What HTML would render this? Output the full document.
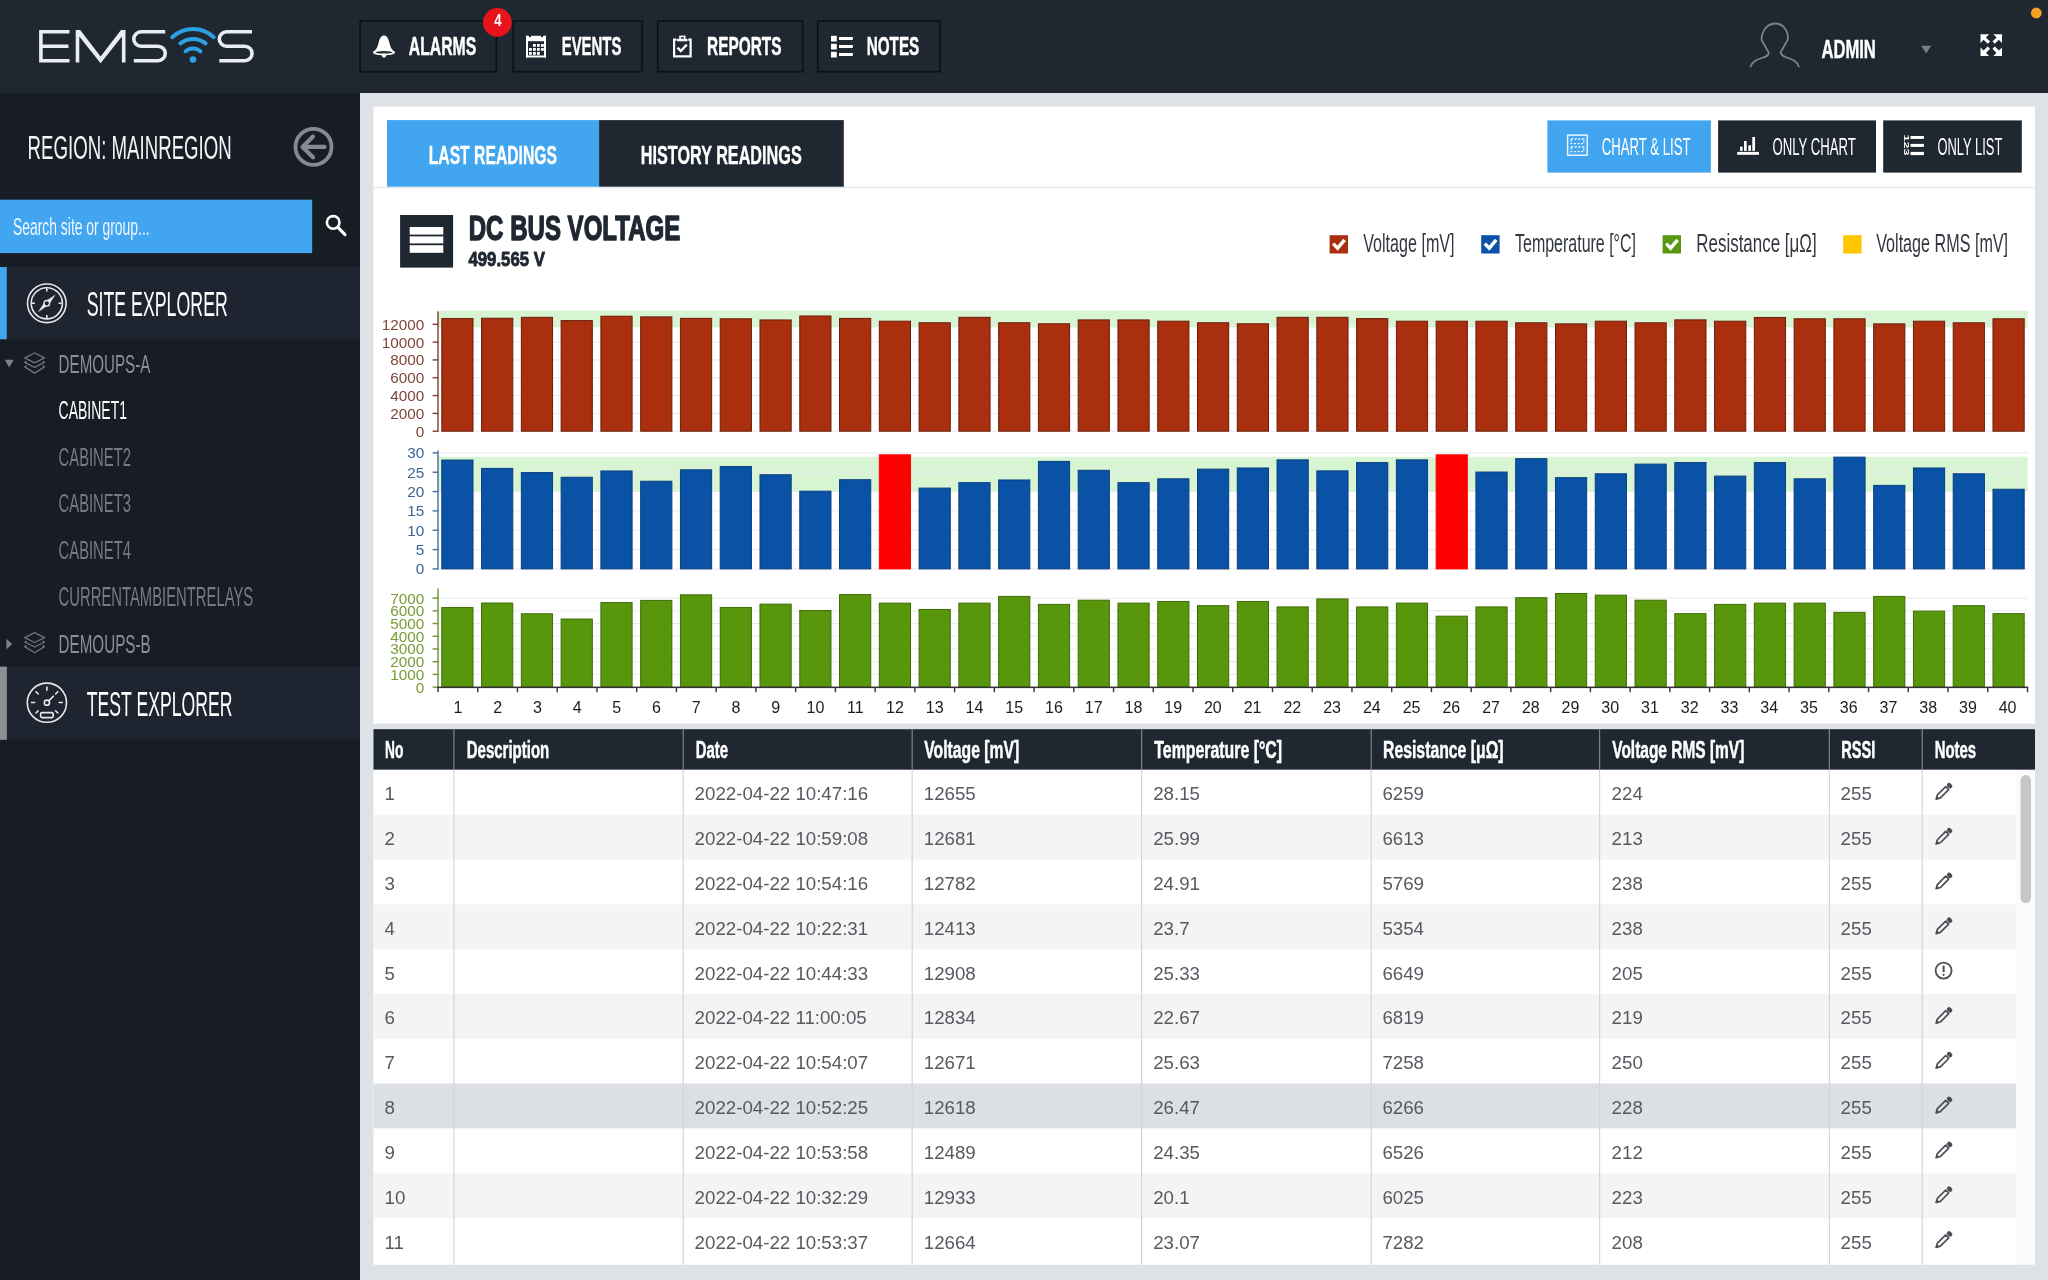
<!DOCTYPE html>
<html><head><meta charset="utf-8"><title>EMSoS - Last Readings</title>
<style>
html,body{margin:0;padding:0;background:#dee1e6;overflow:hidden;}
svg{display:block;font-family:"Liberation Sans",sans-serif;will-change:transform;}
</style></head>
<body>
<svg width="2048" height="1280" viewBox="0 0 2048 1280">
<rect x="0.00" y="0.00" width="2048.00" height="1280.00" fill="#dee1e6" />
<rect x="0.00" y="0.00" width="2048.00" height="93.00" fill="#1f2731" />
<rect x="0.00" y="93.00" width="360.00" height="1187.00" fill="#181d25" />
<g fill="none" stroke="#e9ecf0" stroke-width="3.6" stroke-linecap="butt" stroke-linejoin="miter">
<path d="M69.5 31.8 H40.9 V60.7 H69.5 M40.9 46.2 H68.5"/>
</g>
<path d="M75.7 62.5 V30 H80.2 L100.6 56.6 L121 30 H125.5 V62.5 H121.9 V36.6 L100.6 63.2 L79.3 36.6 V62.5 Z" fill="#e9ecf0"/>
<path d="M165.2 31.8 H141.0 A7.2 7.2 0 0 0 141.0 46.2 H158.0 A7.2 7.2 0 0 1 158.0 60.7 H133.8" fill="none" stroke="#e9ecf0" stroke-width="3.6"/>
<path d="M252.0 31.8 H226.5 A7.2 7.2 0 0 0 226.5 46.2 H244.8 A7.2 7.2 0 0 1 244.8 60.7 H219.3" fill="none" stroke="#e9ecf0" stroke-width="3.6"/>
<path d="M172.2 37.2 A30.5 30.5 0 0 1 213.8 37.2" fill="none" stroke="#2d9fe3" stroke-width="4" stroke-linecap="round"/>
<path d="M180.4 43.3 A20.5 20.5 0 0 1 205.6 43.3" fill="none" stroke="#2d9fe3" stroke-width="4" stroke-linecap="round"/>
<path d="M185.6 51.3 A11 11 0 0 1 200.4 51.3" fill="none" stroke="#2d9fe3" stroke-width="4" stroke-linecap="round"/>
<circle cx="193.0" cy="59.5" r="3.3" fill="#2d9fe3"/>
<rect x="360.15" y="21.1" width="136.20" height="50.6" fill="#1f2731" stroke="#0d1116" stroke-width="1.6"/>
<rect x="513.25" y="21.1" width="128.80" height="50.6" fill="#1f2731" stroke="#0d1116" stroke-width="1.6"/>
<rect x="657.75" y="21.1" width="145.00" height="50.6" fill="#1f2731" stroke="#0d1116" stroke-width="1.6"/>
<rect x="817.75" y="21.1" width="122.30" height="50.6" fill="#1f2731" stroke="#0d1116" stroke-width="1.6"/>
<text x="408.73" y="55.27" font-size="25.51" font-weight="bold" fill="#ffffff" textLength="67.56" lengthAdjust="spacingAndGlyphs"  stroke="#ffffff" stroke-width="0.45" stroke-linejoin="round">ALARMS</text>
<text x="561.73" y="55.27" font-size="25.51" font-weight="bold" fill="#ffffff" textLength="59.65" lengthAdjust="spacingAndGlyphs"  stroke="#ffffff" stroke-width="0.45" stroke-linejoin="round">EVENTS</text>
<text x="707.02" y="55.27" font-size="25.51" font-weight="bold" fill="#ffffff" textLength="74.55" lengthAdjust="spacingAndGlyphs"  stroke="#ffffff" stroke-width="0.45" stroke-linejoin="round">REPORTS</text>
<text x="866.73" y="55.27" font-size="25.51" font-weight="bold" fill="#ffffff" textLength="52.55" lengthAdjust="spacingAndGlyphs"  stroke="#ffffff" stroke-width="0.45" stroke-linejoin="round">NOTES</text>
<circle cx="497.4" cy="22.4" r="14.4" fill="#e8141b"/>
<text x="494.20" y="25.60" font-size="17.01" font-weight="bold" fill="#ffffff" textLength="7.30" lengthAdjust="spacingAndGlyphs" >4</text>
<path d="M384 35.4 C386.6 35.4 388.2 38 389.1 41.6 C390.1 46 390.8 49.2 394.8 51.8 C396.2 53.6 391.6 55.4 384 55.4 C376.4 55.4 371.8 53.6 373.2 51.8 C377.2 49.2 377.9 46 378.9 41.6 C379.8 38 381.4 35.4 384 35.4 Z" fill="#fff"/>
<ellipse cx="384" cy="52.3" rx="8.6" ry="1.25" fill="#1f2731"/>
<circle cx="384" cy="55.6" r="2.1" fill="#fff"/>
<g fill="#fff">
<rect x="526" y="35.8" width="20" height="5.4"/>
<rect x="526" y="35.8" width="2" height="21.7"/><rect x="544" y="35.8" width="2" height="21.7"/><rect x="526" y="55.5" width="20" height="2"/>
<rect x="533" y="44" width="2.8" height="2.8"/>
<rect x="537" y="44" width="2.8" height="2.8"/>
<rect x="541" y="44" width="2.8" height="2.8"/>
<rect x="529" y="48" width="2.8" height="2.8"/>
<rect x="533" y="48" width="2.8" height="2.8"/>
<rect x="537" y="48" width="2.8" height="2.8"/>
<rect x="541" y="48" width="2.8" height="2.8"/>
<rect x="529" y="52" width="2.8" height="2.8"/>
<rect x="533" y="52" width="2.8" height="2.8"/>
<rect x="537" y="52" width="2.8" height="2.8"/>
</g>
<circle cx="530" cy="36" r="1.2" fill="#1f2731"/><circle cx="542" cy="36" r="1.2" fill="#1f2731"/>
<g fill="none" stroke="#fff" stroke-width="2.2">
<path d="M676.5 39.6 H674.1 V56.4 H690.6 V39.6 H688.2"/>
<path d="M677.5 47.6 L680.8 51 L686.8 44.6" stroke-width="2.4"/>
</g>
<rect x="677" y="38.9" width="10.5" height="2.4" fill="#fff"/>
<rect x="680" y="36.4" width="4.8" height="3.2" fill="none" stroke="#fff" stroke-width="1.6"/>
<g fill="#fff">
<rect x="831" y="35.8" width="5.8" height="5.7"/>
<rect x="831" y="43.8" width="5.8" height="5.7"/>
<rect x="831" y="51.8" width="5.8" height="5.7"/>
<rect x="839" y="37" width="13.8" height="3"/>
<rect x="839" y="45" width="13.8" height="3"/>
<rect x="839" y="53" width="13.8" height="3"/>
</g>
<path d="M1750.5 66.5 C1753 61 1757 59.5 1762 58 C1766 56.8 1769 55 1768.6 52.4 L1761.8 40.5 C1761 38 1763 30 1766 27.5 C1769 24.5 1772 23.5 1775.4 23.5 C1779 23.5 1782.5 25 1785 28.5 C1787.5 32 1788.3 37 1787.6 40 L1780.6 52.4 C1780.8 55 1784 56.8 1788 58 C1793 59.5 1796.5 61 1798.8 66.5" fill="none" stroke="#7c838c" stroke-width="1.8" stroke-linecap="round"/>
<text x="1821.42" y="57.57" font-size="26.24" font-weight="bold" fill="#ffffff" textLength="54.46" lengthAdjust="spacingAndGlyphs"  stroke="#ffffff" stroke-width="0.45" stroke-linejoin="round">ADMIN</text>
<path d="M1921.2 45.8 H1931.2 L1926.2 53.6 Z" fill="#79808a"/>
<polygon points="1980.50,34.30 1989.10,34.30 1980.50,42.90" fill="#fff"/>
<line x1="1984.00" y1="37.80" x2="1988.90" y2="42.70" stroke="#fff" stroke-width="3.3"/>
<polygon points="2002.00,34.30 1993.40,34.30 2002.00,42.90" fill="#fff"/>
<line x1="1998.50" y1="37.80" x2="1993.60" y2="42.70" stroke="#fff" stroke-width="3.3"/>
<polygon points="1980.50,56.00 1989.10,56.00 1980.50,47.40" fill="#fff"/>
<line x1="1984.00" y1="52.50" x2="1988.90" y2="47.60" stroke="#fff" stroke-width="3.3"/>
<polygon points="2002.00,56.00 1993.40,56.00 2002.00,47.40" fill="#fff"/>
<line x1="1998.50" y1="52.50" x2="1993.60" y2="47.60" stroke="#fff" stroke-width="3.3"/>
<circle cx="2036.3" cy="13" r="5.4" fill="#f5a01e"/>
<text x="27.50" y="158.70" font-size="32.99" font-weight="normal" fill="#f2f4f6" textLength="204.31" lengthAdjust="spacingAndGlyphs" >REGION: MAINREGION</text>
<circle cx="313.5" cy="146.9" r="18" fill="none" stroke="#858a90" stroke-width="3.8"/>
<path d="M302.5 146.9 H324.5 M313 136.6 L302.5 146.9 L313 157.2" fill="none" stroke="#858a90" stroke-width="4.2" stroke-linecap="round" stroke-linejoin="round"/>
<rect x="0.00" y="199.70" width="312.20" height="53.40" fill="#42a5f0" />
<text x="13.00" y="235.40" font-size="23.55" font-weight="normal" fill="#eef7fd" textLength="136.61" lengthAdjust="spacingAndGlyphs" >Search site or group...</text>
<circle cx="333.2" cy="222.4" r="6.3" fill="none" stroke="#fff" stroke-width="2.6"/>
<path d="M338 227.4 L345 234.6" stroke="#fff" stroke-width="3" stroke-linecap="round"/>
<rect x="0.00" y="267.00" width="360.00" height="72.30" fill="#1e2530" />
<rect x="0.00" y="267.00" width="6.80" height="72.30" fill="#42a5f0" />
<g fill="none" stroke="#e6e8ea" stroke-width="1.6">
<circle cx="46.8" cy="303.3" r="19.3"/><circle cx="46.8" cy="303.3" r="15.6"/>
<path d="M46.8 288.5 V291.5 M46.8 315 V318 M32 303.3 H35 M58.6 303.3 H61.6"/>
</g>
<path d="M55.6 294.4 L48.6 305.2 L45 301.6 Z" fill="#e6e8ea"/><path d="M37.9 312.2 L44.9 301.4 L48.5 305 Z" fill="#e6e8ea"/>
<circle cx="46.8" cy="303.3" r="2.8" fill="#1e2530" stroke="#e6e8ea" stroke-width="1.4"/>
<text x="86.70" y="315.50" font-size="34.16" font-weight="normal" fill="#ffffff" textLength="141.10" lengthAdjust="spacingAndGlyphs" >SITE EXPLORER</text>
<path d="M4.7 359.8 H13.7 L9.2 367.5 Z" fill="#7b8087"/>
<g fill="none" stroke="#6f757c" stroke-width="1.3" stroke-linejoin="round">
<path d="M34.6 353.0 L44.5 357.90000000000003 L34.6 362.8 L24.7 357.90000000000003 Z"/>
<path d="M26.6 361.3 L24.7 362.3 L34.6 367.3 L44.5 362.3 L42.6 361.3"/>
<path d="M26.6 365.8 L24.7 366.90000000000003 L34.6 373.1 L44.5 366.90000000000003 L42.6 365.8"/>
</g>
<text x="58.60" y="372.50" font-size="25.44" font-weight="normal" fill="#8b9097" textLength="91.80" lengthAdjust="spacingAndGlyphs" >DEMOUPS-A</text>
<text x="58.60" y="419.40" font-size="26.02" font-weight="normal" fill="#ffffff" textLength="68.40" lengthAdjust="spacingAndGlyphs" >CABINET1</text>
<text x="58.60" y="466.00" font-size="26.02" font-weight="normal" fill="#747b84" textLength="72.30" lengthAdjust="spacingAndGlyphs" >CABINET2</text>
<text x="58.60" y="512.20" font-size="26.02" font-weight="normal" fill="#747b84" textLength="72.30" lengthAdjust="spacingAndGlyphs" >CABINET3</text>
<text x="58.60" y="559.00" font-size="26.02" font-weight="normal" fill="#747b84" textLength="72.30" lengthAdjust="spacingAndGlyphs" >CABINET4</text>
<text x="58.60" y="605.80" font-size="26.89" font-weight="normal" fill="#747b84" textLength="194.61" lengthAdjust="spacingAndGlyphs" >CURRENTAMBIENTRELAYS</text>
<path d="M6.3 638.8 L12.2 644.1 L6.3 649.4 Z" fill="#7b8087"/>
<g fill="none" stroke="#6f757c" stroke-width="1.3" stroke-linejoin="round">
<path d="M34.6 632.7 L44.5 637.6 L34.6 642.5 L24.7 637.6 Z"/>
<path d="M26.6 641 L24.7 642 L34.6 647 L44.5 642 L42.6 641"/>
<path d="M26.6 645.5 L24.7 646.6 L34.6 652.8 L44.5 646.6 L42.6 645.5"/>
</g>
<text x="58.60" y="652.70" font-size="25.44" font-weight="normal" fill="#8b9097" textLength="92.00" lengthAdjust="spacingAndGlyphs" >DEMOUPS-B</text>
<rect x="0.00" y="666.60" width="360.00" height="73.20" fill="#1e2530" />
<rect x="0.00" y="666.60" width="6.90" height="73.20" fill="#8c9196" />
<g fill="none" stroke="#e6e8ea" stroke-width="1.6" stroke-linecap="round">
<circle cx="46.9" cy="702.7" r="19.6"/>
<path d="M46.9 687 V690.2 M36 691.8 L38.2 694 M57.8 691.8 L55.6 694 M31.5 702.5 H34.6 M59.2 702.5 H62.3 M36 713 L38.2 710.8 M57.8 713 L55.6 710.8"/>
<path d="M49 700.6 L53.4 696.2"/>
<circle cx="46.9" cy="702.7" r="2.6"/>
<rect x="40.6" y="712.6" width="12.6" height="5" rx="1.5"/>
</g>
<text x="86.70" y="716.40" font-size="35.76" font-weight="normal" fill="#ffffff" textLength="145.80" lengthAdjust="spacingAndGlyphs" >TEST EXPLORER</text>
<rect x="373.50" y="106.60" width="1661.50" height="617.00" fill="#ffffff" />
<rect x="373.50" y="186.80" width="1661.50" height="1.40" fill="#e6e7ea" />
<rect x="387.00" y="120.10" width="212.10" height="66.60" fill="#42a5f0" />
<rect x="599.10" y="120.10" width="244.70" height="66.60" fill="#1f2731" />
<text x="428.70" y="163.80" font-size="26.31" font-weight="bold" fill="#ffffff" textLength="128.30" lengthAdjust="spacingAndGlyphs"  stroke="#ffffff" stroke-width="0.4" stroke-linejoin="round">LAST READINGS</text>
<text x="640.80" y="163.80" font-size="26.31" font-weight="bold" fill="#ffffff" textLength="160.90" lengthAdjust="spacingAndGlyphs"  stroke="#ffffff" stroke-width="0.4" stroke-linejoin="round">HISTORY READINGS</text>
<rect x="1547.40" y="120.40" width="163.50" height="52.20" fill="#42a5f0" />
<rect x="1718.10" y="120.40" width="157.90" height="52.20" fill="#1f2731" />
<rect x="1883.20" y="120.40" width="138.60" height="52.20" fill="#1f2731" />
<text x="1601.70" y="154.70" font-size="23.40" font-weight="normal" fill="#ffffff" textLength="88.80" lengthAdjust="spacingAndGlyphs" >CHART &amp; LIST</text>
<text x="1772.40" y="154.70" font-size="23.40" font-weight="normal" fill="#ffffff" textLength="83.50" lengthAdjust="spacingAndGlyphs" >ONLY CHART</text>
<text x="1937.50" y="154.70" font-size="23.40" font-weight="normal" fill="#ffffff" textLength="64.79" lengthAdjust="spacingAndGlyphs" >ONLY LIST</text>
<rect x="1567.6" y="135.1" width="19.6" height="20.1" fill="none" stroke="#e8f6ff" stroke-width="1.5"/>
<rect x="1571" y="139" width="12.8" height="4.6" fill="none" stroke="#e8f6ff" stroke-width="1.3" stroke-dasharray="2.2 1.4"/>
<rect x="1571" y="147" width="12.8" height="4.6" fill="none" stroke="#e8f6ff" stroke-width="1.3" stroke-dasharray="2.2 1.4"/>
<g fill="#fff">
<rect x="1740.1" y="146.6" width="2.5" height="4.3"/><rect x="1744" y="141" width="2.7" height="9.9"/>
<rect x="1748.3" y="145.3" width="2.7" height="5.6"/><rect x="1752.3" y="137" width="2.7" height="13.9"/>
<rect x="1737.2" y="151.9" width="21.8" height="2.9"/>
</g>
<g fill="#fff">
<rect x="1910.5" y="136" width="13.4" height="2.9"/><rect x="1910.5" y="143.9" width="13.4" height="3"/><rect x="1910.5" y="151.9" width="13.4" height="3.2"/>
</g>
<text x="0" y="0" font-size="7.2" font-weight="bold" fill="#fff" transform="translate(1904 134.6) rotate(90)" textLength="21" lengthAdjust="spacingAndGlyphs">123</text>
<rect x="400.10" y="215.00" width="53.00" height="52.60" fill="#1f2731" />
<g fill="#fff"><rect x="409.7" y="227" width="33.6" height="7.6"/><rect x="409.7" y="236.4" width="33.6" height="7"/><rect x="409.7" y="245.2" width="33.6" height="7.6"/></g>
<text x="468.75" y="239.65" font-size="35.61" font-weight="bold" fill="#1f2731" textLength="211.51" lengthAdjust="spacingAndGlyphs"  stroke="#1f2731" stroke-width="1.5" stroke-linejoin="round">DC BUS VOLTAGE</text>
<text x="468.45" y="266.35" font-size="20.93" font-weight="bold" fill="#1f2731" textLength="76.49" lengthAdjust="spacingAndGlyphs"  stroke="#1f2731" stroke-width="0.9" stroke-linejoin="round">499.565 V</text>
<rect x="1329.6" y="235.2" width="18.4" height="18.3" fill="#a8300f"/>
<path d="M1333.2 243.6 L1337.6 248.2 L1344.6 239.8" fill="none" stroke="#fff" stroke-width="3.4"/>
<rect x="1481.2" y="235.2" width="18.4" height="18.3" fill="#0a52a7"/>
<path d="M1484.8 243.6 L1489.2 248.2 L1496.2 239.8" fill="none" stroke="#fff" stroke-width="3.4"/>
<rect x="1662.6" y="235.2" width="18.4" height="18.3" fill="#58980f"/>
<path d="M1666.2 243.6 L1670.6 248.2 L1677.6 239.8" fill="none" stroke="#fff" stroke-width="3.4"/>
<rect x="1843.2" y="235.2" width="18.4" height="18.3" fill="#ffc500"/>
<text x="1363.20" y="252.40" font-size="26.16" font-weight="normal" fill="#333840" textLength="91.40" lengthAdjust="spacingAndGlyphs" >Voltage [mV]</text>
<text x="1515.00" y="252.40" font-size="26.16" font-weight="normal" fill="#333840" textLength="121.01" lengthAdjust="spacingAndGlyphs" >Temperature [°C]</text>
<text x="1696.30" y="252.40" font-size="26.16" font-weight="normal" fill="#333840" textLength="120.30" lengthAdjust="spacingAndGlyphs" >Resistance [μΩ]</text>
<text x="1876.20" y="252.40" font-size="26.16" font-weight="normal" fill="#333840" textLength="131.90" lengthAdjust="spacingAndGlyphs" >Voltage RMS [mV]</text>
<rect x="438.0" y="310.8" width="1589.5" height="16.6" fill="#d7f5d2"/>
<rect x="438.0" y="430.70" width="1589.5" height="1" fill="#e9e9ea"/>
<rect x="438.0" y="412.88" width="1589.5" height="1" fill="#e9e9ea"/>
<rect x="438.0" y="395.07" width="1589.5" height="1" fill="#e9e9ea"/>
<rect x="438.0" y="377.25" width="1589.5" height="1" fill="#e9e9ea"/>
<rect x="438.0" y="359.43" width="1589.5" height="1" fill="#e9e9ea"/>
<rect x="438.0" y="341.62" width="1589.5" height="1" fill="#e9e9ea"/>
<rect x="438.0" y="323.80" width="1589.5" height="1" fill="#e9e9ea"/>
<rect x="441.80" y="318.47" width="31.2" height="112.73" fill="#a92f0e" stroke="#6a1d0b" stroke-width="1"/>
<rect x="481.57" y="318.23" width="31.2" height="112.97" fill="#a92f0e" stroke="#6a1d0b" stroke-width="1"/>
<rect x="521.35" y="317.33" width="31.2" height="113.87" fill="#a92f0e" stroke="#6a1d0b" stroke-width="1"/>
<rect x="561.12" y="320.62" width="31.2" height="110.58" fill="#a92f0e" stroke="#6a1d0b" stroke-width="1"/>
<rect x="600.90" y="316.21" width="31.2" height="114.99" fill="#a92f0e" stroke="#6a1d0b" stroke-width="1"/>
<rect x="640.67" y="316.87" width="31.2" height="114.33" fill="#a92f0e" stroke="#6a1d0b" stroke-width="1"/>
<rect x="680.44" y="318.32" width="31.2" height="112.88" fill="#a92f0e" stroke="#6a1d0b" stroke-width="1"/>
<rect x="720.22" y="318.79" width="31.2" height="112.41" fill="#a92f0e" stroke="#6a1d0b" stroke-width="1"/>
<rect x="759.99" y="319.94" width="31.2" height="111.26" fill="#a92f0e" stroke="#6a1d0b" stroke-width="1"/>
<rect x="799.77" y="315.99" width="31.2" height="115.21" fill="#a92f0e" stroke="#6a1d0b" stroke-width="1"/>
<rect x="839.54" y="318.38" width="31.2" height="112.82" fill="#a92f0e" stroke="#6a1d0b" stroke-width="1"/>
<rect x="879.31" y="321.20" width="31.2" height="110.00" fill="#a92f0e" stroke="#6a1d0b" stroke-width="1"/>
<rect x="919.09" y="322.75" width="31.2" height="108.45" fill="#a92f0e" stroke="#6a1d0b" stroke-width="1"/>
<rect x="958.86" y="317.32" width="31.2" height="113.88" fill="#a92f0e" stroke="#6a1d0b" stroke-width="1"/>
<rect x="998.64" y="322.75" width="31.2" height="108.45" fill="#a92f0e" stroke="#6a1d0b" stroke-width="1"/>
<rect x="1038.41" y="323.78" width="31.2" height="107.42" fill="#a92f0e" stroke="#6a1d0b" stroke-width="1"/>
<rect x="1078.18" y="319.91" width="31.2" height="111.29" fill="#a92f0e" stroke="#6a1d0b" stroke-width="1"/>
<rect x="1117.96" y="319.91" width="31.2" height="111.29" fill="#a92f0e" stroke="#6a1d0b" stroke-width="1"/>
<rect x="1157.73" y="321.20" width="31.2" height="110.00" fill="#a92f0e" stroke="#6a1d0b" stroke-width="1"/>
<rect x="1197.51" y="322.75" width="31.2" height="108.45" fill="#a92f0e" stroke="#6a1d0b" stroke-width="1"/>
<rect x="1237.28" y="323.78" width="31.2" height="107.42" fill="#a92f0e" stroke="#6a1d0b" stroke-width="1"/>
<rect x="1277.05" y="317.32" width="31.2" height="113.88" fill="#a92f0e" stroke="#6a1d0b" stroke-width="1"/>
<rect x="1316.83" y="317.32" width="31.2" height="113.88" fill="#a92f0e" stroke="#6a1d0b" stroke-width="1"/>
<rect x="1356.60" y="318.62" width="31.2" height="112.58" fill="#a92f0e" stroke="#6a1d0b" stroke-width="1"/>
<rect x="1396.38" y="321.20" width="31.2" height="110.00" fill="#a92f0e" stroke="#6a1d0b" stroke-width="1"/>
<rect x="1436.15" y="321.20" width="31.2" height="110.00" fill="#a92f0e" stroke="#6a1d0b" stroke-width="1"/>
<rect x="1475.92" y="321.20" width="31.2" height="110.00" fill="#a92f0e" stroke="#6a1d0b" stroke-width="1"/>
<rect x="1515.70" y="322.80" width="31.2" height="108.40" fill="#a92f0e" stroke="#6a1d0b" stroke-width="1"/>
<rect x="1555.47" y="323.87" width="31.2" height="107.33" fill="#a92f0e" stroke="#6a1d0b" stroke-width="1"/>
<rect x="1595.25" y="321.20" width="31.2" height="110.00" fill="#a92f0e" stroke="#6a1d0b" stroke-width="1"/>
<rect x="1635.02" y="322.80" width="31.2" height="108.40" fill="#a92f0e" stroke="#6a1d0b" stroke-width="1"/>
<rect x="1674.79" y="319.86" width="31.2" height="111.34" fill="#a92f0e" stroke="#6a1d0b" stroke-width="1"/>
<rect x="1714.57" y="321.20" width="31.2" height="110.00" fill="#a92f0e" stroke="#6a1d0b" stroke-width="1"/>
<rect x="1754.34" y="317.45" width="31.2" height="113.75" fill="#a92f0e" stroke="#6a1d0b" stroke-width="1"/>
<rect x="1794.12" y="318.79" width="31.2" height="112.41" fill="#a92f0e" stroke="#6a1d0b" stroke-width="1"/>
<rect x="1833.89" y="318.79" width="31.2" height="112.41" fill="#a92f0e" stroke="#6a1d0b" stroke-width="1"/>
<rect x="1873.66" y="323.87" width="31.2" height="107.33" fill="#a92f0e" stroke="#6a1d0b" stroke-width="1"/>
<rect x="1913.44" y="321.20" width="31.2" height="110.00" fill="#a92f0e" stroke="#6a1d0b" stroke-width="1"/>
<rect x="1953.21" y="322.80" width="31.2" height="108.40" fill="#a92f0e" stroke="#6a1d0b" stroke-width="1"/>
<rect x="1992.99" y="318.79" width="31.2" height="112.41" fill="#a92f0e" stroke="#6a1d0b" stroke-width="1"/>
<rect x="437.3" y="311.4" width="1.4" height="120.5" fill="#7d3f30"/>
<rect x="432.6" y="430.50" width="5.4" height="1.4" fill="#7d3f30"/>
<text x="424.2" y="436.60" font-size="15.3" fill="#80463a" text-anchor="end">0</text>
<rect x="432.6" y="412.68" width="5.4" height="1.4" fill="#7d3f30"/>
<text x="424.2" y="418.78" font-size="15.3" fill="#80463a" text-anchor="end">2000</text>
<rect x="432.6" y="394.87" width="5.4" height="1.4" fill="#7d3f30"/>
<text x="424.2" y="400.97" font-size="15.3" fill="#80463a" text-anchor="end">4000</text>
<rect x="432.6" y="377.05" width="5.4" height="1.4" fill="#7d3f30"/>
<text x="424.2" y="383.15" font-size="15.3" fill="#80463a" text-anchor="end">6000</text>
<rect x="432.6" y="359.23" width="5.4" height="1.4" fill="#7d3f30"/>
<text x="424.2" y="365.33" font-size="15.3" fill="#80463a" text-anchor="end">8000</text>
<rect x="432.6" y="341.42" width="5.4" height="1.4" fill="#7d3f30"/>
<text x="424.2" y="347.52" font-size="15.3" fill="#80463a" text-anchor="end">10000</text>
<rect x="432.6" y="323.60" width="5.4" height="1.4" fill="#7d3f30"/>
<text x="424.2" y="329.70" font-size="15.3" fill="#80463a" text-anchor="end">12000</text>
<rect x="438.0" y="456.8" width="1589.5" height="35.0" fill="#d7f5d2"/>
<rect x="438.0" y="568.40" width="1589.5" height="1" fill="#e9e9ea"/>
<rect x="438.0" y="549.07" width="1589.5" height="1" fill="#e9e9ea"/>
<rect x="438.0" y="529.73" width="1589.5" height="1" fill="#e9e9ea"/>
<rect x="438.0" y="510.40" width="1589.5" height="1" fill="#e9e9ea"/>
<rect x="438.0" y="491.07" width="1589.5" height="1" fill="#e9e9ea"/>
<rect x="438.0" y="471.73" width="1589.5" height="1" fill="#e9e9ea"/>
<rect x="438.0" y="452.40" width="1589.5" height="1" fill="#e9e9ea"/>
<rect x="441.80" y="460.05" width="31.2" height="108.85" fill="#0a52a6" stroke="#0a3f80" stroke-width="1"/>
<rect x="481.57" y="468.41" width="31.2" height="100.49" fill="#0a52a6" stroke="#0a3f80" stroke-width="1"/>
<rect x="521.35" y="472.58" width="31.2" height="96.32" fill="#0a52a6" stroke="#0a3f80" stroke-width="1"/>
<rect x="561.12" y="477.26" width="31.2" height="91.64" fill="#0a52a6" stroke="#0a3f80" stroke-width="1"/>
<rect x="600.90" y="470.96" width="31.2" height="97.94" fill="#0a52a6" stroke="#0a3f80" stroke-width="1"/>
<rect x="640.67" y="481.24" width="31.2" height="87.66" fill="#0a52a6" stroke="#0a3f80" stroke-width="1"/>
<rect x="680.44" y="469.80" width="31.2" height="99.10" fill="#0a52a6" stroke="#0a3f80" stroke-width="1"/>
<rect x="720.22" y="466.55" width="31.2" height="102.35" fill="#0a52a6" stroke="#0a3f80" stroke-width="1"/>
<rect x="759.99" y="474.75" width="31.2" height="94.15" fill="#0a52a6" stroke="#0a3f80" stroke-width="1"/>
<rect x="799.77" y="491.18" width="31.2" height="77.72" fill="#0a52a6" stroke="#0a3f80" stroke-width="1"/>
<rect x="839.54" y="479.70" width="31.2" height="89.20" fill="#0a52a6" stroke="#0a3f80" stroke-width="1"/>
<rect x="879.31" y="454.83" width="31.2" height="114.07" fill="#ff0000" stroke="#ff0000" stroke-width="1"/>
<rect x="919.09" y="488.09" width="31.2" height="80.81" fill="#0a52a6" stroke="#0a3f80" stroke-width="1"/>
<rect x="958.86" y="482.67" width="31.2" height="86.23" fill="#0a52a6" stroke="#0a3f80" stroke-width="1"/>
<rect x="998.64" y="479.97" width="31.2" height="88.93" fill="#0a52a6" stroke="#0a3f80" stroke-width="1"/>
<rect x="1038.41" y="461.41" width="31.2" height="107.49" fill="#0a52a6" stroke="#0a3f80" stroke-width="1"/>
<rect x="1078.18" y="470.30" width="31.2" height="98.60" fill="#0a52a6" stroke="#0a3f80" stroke-width="1"/>
<rect x="1117.96" y="482.67" width="31.2" height="86.23" fill="#0a52a6" stroke="#0a3f80" stroke-width="1"/>
<rect x="1157.73" y="478.81" width="31.2" height="90.09" fill="#0a52a6" stroke="#0a3f80" stroke-width="1"/>
<rect x="1197.51" y="469.14" width="31.2" height="99.76" fill="#0a52a6" stroke="#0a3f80" stroke-width="1"/>
<rect x="1237.28" y="467.98" width="31.2" height="100.92" fill="#0a52a6" stroke="#0a3f80" stroke-width="1"/>
<rect x="1277.05" y="459.86" width="31.2" height="109.04" fill="#0a52a6" stroke="#0a3f80" stroke-width="1"/>
<rect x="1316.83" y="470.88" width="31.2" height="98.02" fill="#0a52a6" stroke="#0a3f80" stroke-width="1"/>
<rect x="1356.60" y="462.57" width="31.2" height="106.33" fill="#0a52a6" stroke="#0a3f80" stroke-width="1"/>
<rect x="1396.38" y="459.86" width="31.2" height="109.04" fill="#0a52a6" stroke="#0a3f80" stroke-width="1"/>
<rect x="1436.15" y="454.83" width="31.2" height="114.07" fill="#ff0000" stroke="#ff0000" stroke-width="1"/>
<rect x="1475.92" y="472.04" width="31.2" height="96.86" fill="#0a52a6" stroke="#0a3f80" stroke-width="1"/>
<rect x="1515.70" y="458.70" width="31.2" height="110.20" fill="#0a52a6" stroke="#0a3f80" stroke-width="1"/>
<rect x="1555.47" y="477.65" width="31.2" height="91.25" fill="#0a52a6" stroke="#0a3f80" stroke-width="1"/>
<rect x="1595.25" y="473.78" width="31.2" height="95.12" fill="#0a52a6" stroke="#0a3f80" stroke-width="1"/>
<rect x="1635.02" y="464.11" width="31.2" height="104.79" fill="#0a52a6" stroke="#0a3f80" stroke-width="1"/>
<rect x="1674.79" y="462.57" width="31.2" height="106.33" fill="#0a52a6" stroke="#0a3f80" stroke-width="1"/>
<rect x="1714.57" y="476.10" width="31.2" height="92.80" fill="#0a52a6" stroke="#0a3f80" stroke-width="1"/>
<rect x="1754.34" y="462.57" width="31.2" height="106.33" fill="#0a52a6" stroke="#0a3f80" stroke-width="1"/>
<rect x="1794.12" y="478.81" width="31.2" height="90.09" fill="#0a52a6" stroke="#0a3f80" stroke-width="1"/>
<rect x="1833.89" y="457.15" width="31.2" height="111.75" fill="#0a52a6" stroke="#0a3f80" stroke-width="1"/>
<rect x="1873.66" y="485.38" width="31.2" height="83.52" fill="#0a52a6" stroke="#0a3f80" stroke-width="1"/>
<rect x="1913.44" y="467.98" width="31.2" height="100.92" fill="#0a52a6" stroke="#0a3f80" stroke-width="1"/>
<rect x="1953.21" y="473.78" width="31.2" height="95.12" fill="#0a52a6" stroke="#0a3f80" stroke-width="1"/>
<rect x="1992.99" y="489.25" width="31.2" height="79.65" fill="#0a52a6" stroke="#0a3f80" stroke-width="1"/>
<rect x="437.3" y="450.6" width="1.4" height="119.0" fill="#44709c"/>
<rect x="432.6" y="568.20" width="5.4" height="1.4" fill="#44709c"/>
<text x="424.2" y="574.30" font-size="15.3" fill="#3a6592" text-anchor="end">0</text>
<rect x="432.6" y="548.87" width="5.4" height="1.4" fill="#44709c"/>
<text x="424.2" y="554.97" font-size="15.3" fill="#3a6592" text-anchor="end">5</text>
<rect x="432.6" y="529.53" width="5.4" height="1.4" fill="#44709c"/>
<text x="424.2" y="535.63" font-size="15.3" fill="#3a6592" text-anchor="end">10</text>
<rect x="432.6" y="510.20" width="5.4" height="1.4" fill="#44709c"/>
<text x="424.2" y="516.30" font-size="15.3" fill="#3a6592" text-anchor="end">15</text>
<rect x="432.6" y="490.87" width="5.4" height="1.4" fill="#44709c"/>
<text x="424.2" y="496.97" font-size="15.3" fill="#3a6592" text-anchor="end">20</text>
<rect x="432.6" y="471.53" width="5.4" height="1.4" fill="#44709c"/>
<text x="424.2" y="477.63" font-size="15.3" fill="#3a6592" text-anchor="end">25</text>
<rect x="432.6" y="452.20" width="5.4" height="1.4" fill="#44709c"/>
<text x="424.2" y="458.30" font-size="15.3" fill="#3a6592" text-anchor="end">30</text>
<rect x="438.0" y="686.60" width="1589.5" height="1" fill="#e9e9ea"/>
<rect x="438.0" y="673.89" width="1589.5" height="1" fill="#e9e9ea"/>
<rect x="438.0" y="661.17" width="1589.5" height="1" fill="#e9e9ea"/>
<rect x="438.0" y="648.46" width="1589.5" height="1" fill="#e9e9ea"/>
<rect x="438.0" y="635.74" width="1589.5" height="1" fill="#e9e9ea"/>
<rect x="438.0" y="623.03" width="1589.5" height="1" fill="#e9e9ea"/>
<rect x="438.0" y="610.31" width="1589.5" height="1" fill="#e9e9ea"/>
<rect x="438.0" y="597.60" width="1589.5" height="1" fill="#e9e9ea"/>
<rect x="441.80" y="607.52" width="31.2" height="79.58" fill="#58960c" stroke="#3f6d08" stroke-width="1"/>
<rect x="481.57" y="603.02" width="31.2" height="84.08" fill="#58960c" stroke="#3f6d08" stroke-width="1"/>
<rect x="521.35" y="613.75" width="31.2" height="73.35" fill="#58960c" stroke="#3f6d08" stroke-width="1"/>
<rect x="561.12" y="619.03" width="31.2" height="68.07" fill="#58960c" stroke="#3f6d08" stroke-width="1"/>
<rect x="600.90" y="602.56" width="31.2" height="84.54" fill="#58960c" stroke="#3f6d08" stroke-width="1"/>
<rect x="640.67" y="600.40" width="31.2" height="86.70" fill="#58960c" stroke="#3f6d08" stroke-width="1"/>
<rect x="680.44" y="594.82" width="31.2" height="92.28" fill="#58960c" stroke="#3f6d08" stroke-width="1"/>
<rect x="720.22" y="607.43" width="31.2" height="79.67" fill="#58960c" stroke="#3f6d08" stroke-width="1"/>
<rect x="759.99" y="604.13" width="31.2" height="82.97" fill="#58960c" stroke="#3f6d08" stroke-width="1"/>
<rect x="799.77" y="610.50" width="31.2" height="76.60" fill="#58960c" stroke="#3f6d08" stroke-width="1"/>
<rect x="839.54" y="594.51" width="31.2" height="92.59" fill="#58960c" stroke="#3f6d08" stroke-width="1"/>
<rect x="879.31" y="603.13" width="31.2" height="83.97" fill="#58960c" stroke="#3f6d08" stroke-width="1"/>
<rect x="919.09" y="609.43" width="31.2" height="77.67" fill="#58960c" stroke="#3f6d08" stroke-width="1"/>
<rect x="958.86" y="603.13" width="31.2" height="83.97" fill="#58960c" stroke="#3f6d08" stroke-width="1"/>
<rect x="998.64" y="596.42" width="31.2" height="90.68" fill="#58960c" stroke="#3f6d08" stroke-width="1"/>
<rect x="1038.41" y="604.39" width="31.2" height="82.71" fill="#58960c" stroke="#3f6d08" stroke-width="1"/>
<rect x="1078.18" y="600.20" width="31.2" height="86.90" fill="#58960c" stroke="#3f6d08" stroke-width="1"/>
<rect x="1117.96" y="603.13" width="31.2" height="83.97" fill="#58960c" stroke="#3f6d08" stroke-width="1"/>
<rect x="1157.73" y="601.46" width="31.2" height="85.64" fill="#58960c" stroke="#3f6d08" stroke-width="1"/>
<rect x="1197.51" y="605.65" width="31.2" height="81.45" fill="#58960c" stroke="#3f6d08" stroke-width="1"/>
<rect x="1237.28" y="601.46" width="31.2" height="85.64" fill="#58960c" stroke="#3f6d08" stroke-width="1"/>
<rect x="1277.05" y="606.91" width="31.2" height="80.19" fill="#58960c" stroke="#3f6d08" stroke-width="1"/>
<rect x="1316.83" y="598.94" width="31.2" height="88.16" fill="#58960c" stroke="#3f6d08" stroke-width="1"/>
<rect x="1356.60" y="606.91" width="31.2" height="80.19" fill="#58960c" stroke="#3f6d08" stroke-width="1"/>
<rect x="1396.38" y="603.13" width="31.2" height="83.97" fill="#58960c" stroke="#3f6d08" stroke-width="1"/>
<rect x="1436.15" y="616.15" width="31.2" height="70.95" fill="#58960c" stroke="#3f6d08" stroke-width="1"/>
<rect x="1475.92" y="606.91" width="31.2" height="80.19" fill="#58960c" stroke="#3f6d08" stroke-width="1"/>
<rect x="1515.70" y="597.68" width="31.2" height="89.42" fill="#58960c" stroke="#3f6d08" stroke-width="1"/>
<rect x="1555.47" y="593.48" width="31.2" height="93.62" fill="#58960c" stroke="#3f6d08" stroke-width="1"/>
<rect x="1595.25" y="595.16" width="31.2" height="91.94" fill="#58960c" stroke="#3f6d08" stroke-width="1"/>
<rect x="1635.02" y="600.20" width="31.2" height="86.90" fill="#58960c" stroke="#3f6d08" stroke-width="1"/>
<rect x="1674.79" y="613.64" width="31.2" height="73.46" fill="#58960c" stroke="#3f6d08" stroke-width="1"/>
<rect x="1714.57" y="604.39" width="31.2" height="82.71" fill="#58960c" stroke="#3f6d08" stroke-width="1"/>
<rect x="1754.34" y="603.13" width="31.2" height="83.97" fill="#58960c" stroke="#3f6d08" stroke-width="1"/>
<rect x="1794.12" y="603.13" width="31.2" height="83.97" fill="#58960c" stroke="#3f6d08" stroke-width="1"/>
<rect x="1833.89" y="612.38" width="31.2" height="74.72" fill="#58960c" stroke="#3f6d08" stroke-width="1"/>
<rect x="1873.66" y="596.42" width="31.2" height="90.68" fill="#58960c" stroke="#3f6d08" stroke-width="1"/>
<rect x="1913.44" y="611.12" width="31.2" height="75.98" fill="#58960c" stroke="#3f6d08" stroke-width="1"/>
<rect x="1953.21" y="605.65" width="31.2" height="81.45" fill="#58960c" stroke="#3f6d08" stroke-width="1"/>
<rect x="1992.99" y="613.64" width="31.2" height="73.46" fill="#58960c" stroke="#3f6d08" stroke-width="1"/>
<rect x="437.3" y="588.4" width="1.4" height="99.4" fill="#6f9233"/>
<rect x="432.6" y="686.40" width="5.4" height="1.4" fill="#6f9233"/>
<text x="424.2" y="692.50" font-size="15.3" fill="#789c36" text-anchor="end">0</text>
<rect x="432.6" y="673.69" width="5.4" height="1.4" fill="#6f9233"/>
<text x="424.2" y="679.79" font-size="15.3" fill="#789c36" text-anchor="end">1000</text>
<rect x="432.6" y="660.97" width="5.4" height="1.4" fill="#6f9233"/>
<text x="424.2" y="667.07" font-size="15.3" fill="#789c36" text-anchor="end">2000</text>
<rect x="432.6" y="648.26" width="5.4" height="1.4" fill="#6f9233"/>
<text x="424.2" y="654.36" font-size="15.3" fill="#789c36" text-anchor="end">3000</text>
<rect x="432.6" y="635.54" width="5.4" height="1.4" fill="#6f9233"/>
<text x="424.2" y="641.64" font-size="15.3" fill="#789c36" text-anchor="end">4000</text>
<rect x="432.6" y="622.83" width="5.4" height="1.4" fill="#6f9233"/>
<text x="424.2" y="628.93" font-size="15.3" fill="#789c36" text-anchor="end">5000</text>
<rect x="432.6" y="610.11" width="5.4" height="1.4" fill="#6f9233"/>
<text x="424.2" y="616.21" font-size="15.3" fill="#789c36" text-anchor="end">6000</text>
<rect x="432.6" y="597.40" width="5.4" height="1.4" fill="#6f9233"/>
<text x="424.2" y="603.50" font-size="15.3" fill="#789c36" text-anchor="end">7000</text>
<rect x="437.3" y="686.6" width="1590.9" height="1.5" fill="#333333"/>
<rect x="437.30" y="687" width="1.4" height="5.2" fill="#333333"/>
<rect x="477.04" y="687" width="1.4" height="5.2" fill="#333333"/>
<rect x="516.77" y="687" width="1.4" height="5.2" fill="#333333"/>
<rect x="556.51" y="687" width="1.4" height="5.2" fill="#333333"/>
<rect x="596.25" y="687" width="1.4" height="5.2" fill="#333333"/>
<rect x="635.99" y="687" width="1.4" height="5.2" fill="#333333"/>
<rect x="675.72" y="687" width="1.4" height="5.2" fill="#333333"/>
<rect x="715.46" y="687" width="1.4" height="5.2" fill="#333333"/>
<rect x="755.20" y="687" width="1.4" height="5.2" fill="#333333"/>
<rect x="794.94" y="687" width="1.4" height="5.2" fill="#333333"/>
<rect x="834.67" y="687" width="1.4" height="5.2" fill="#333333"/>
<rect x="874.41" y="687" width="1.4" height="5.2" fill="#333333"/>
<rect x="914.15" y="687" width="1.4" height="5.2" fill="#333333"/>
<rect x="953.89" y="687" width="1.4" height="5.2" fill="#333333"/>
<rect x="993.62" y="687" width="1.4" height="5.2" fill="#333333"/>
<rect x="1033.36" y="687" width="1.4" height="5.2" fill="#333333"/>
<rect x="1073.10" y="687" width="1.4" height="5.2" fill="#333333"/>
<rect x="1112.84" y="687" width="1.4" height="5.2" fill="#333333"/>
<rect x="1152.58" y="687" width="1.4" height="5.2" fill="#333333"/>
<rect x="1192.31" y="687" width="1.4" height="5.2" fill="#333333"/>
<rect x="1232.05" y="687" width="1.4" height="5.2" fill="#333333"/>
<rect x="1271.79" y="687" width="1.4" height="5.2" fill="#333333"/>
<rect x="1311.52" y="687" width="1.4" height="5.2" fill="#333333"/>
<rect x="1351.26" y="687" width="1.4" height="5.2" fill="#333333"/>
<rect x="1391.00" y="687" width="1.4" height="5.2" fill="#333333"/>
<rect x="1430.74" y="687" width="1.4" height="5.2" fill="#333333"/>
<rect x="1470.47" y="687" width="1.4" height="5.2" fill="#333333"/>
<rect x="1510.21" y="687" width="1.4" height="5.2" fill="#333333"/>
<rect x="1549.95" y="687" width="1.4" height="5.2" fill="#333333"/>
<rect x="1589.69" y="687" width="1.4" height="5.2" fill="#333333"/>
<rect x="1629.42" y="687" width="1.4" height="5.2" fill="#333333"/>
<rect x="1669.16" y="687" width="1.4" height="5.2" fill="#333333"/>
<rect x="1708.90" y="687" width="1.4" height="5.2" fill="#333333"/>
<rect x="1748.64" y="687" width="1.4" height="5.2" fill="#333333"/>
<rect x="1788.37" y="687" width="1.4" height="5.2" fill="#333333"/>
<rect x="1828.11" y="687" width="1.4" height="5.2" fill="#333333"/>
<rect x="1867.85" y="687" width="1.4" height="5.2" fill="#333333"/>
<rect x="1907.59" y="687" width="1.4" height="5.2" fill="#333333"/>
<rect x="1947.32" y="687" width="1.4" height="5.2" fill="#333333"/>
<rect x="1987.06" y="687" width="1.4" height="5.2" fill="#333333"/>
<rect x="2026.80" y="687" width="1.4" height="5.2" fill="#333333"/>
<text x="457.87" y="713.4" font-size="16" fill="#1c1c1c" text-anchor="middle">1</text>
<text x="497.61" y="713.4" font-size="16" fill="#1c1c1c" text-anchor="middle">2</text>
<text x="537.34" y="713.4" font-size="16" fill="#1c1c1c" text-anchor="middle">3</text>
<text x="577.08" y="713.4" font-size="16" fill="#1c1c1c" text-anchor="middle">4</text>
<text x="616.82" y="713.4" font-size="16" fill="#1c1c1c" text-anchor="middle">5</text>
<text x="656.56" y="713.4" font-size="16" fill="#1c1c1c" text-anchor="middle">6</text>
<text x="696.29" y="713.4" font-size="16" fill="#1c1c1c" text-anchor="middle">7</text>
<text x="736.03" y="713.4" font-size="16" fill="#1c1c1c" text-anchor="middle">8</text>
<text x="775.77" y="713.4" font-size="16" fill="#1c1c1c" text-anchor="middle">9</text>
<text x="815.51" y="713.4" font-size="16" fill="#1c1c1c" text-anchor="middle">10</text>
<text x="855.24" y="713.4" font-size="16" fill="#1c1c1c" text-anchor="middle">11</text>
<text x="894.98" y="713.4" font-size="16" fill="#1c1c1c" text-anchor="middle">12</text>
<text x="934.72" y="713.4" font-size="16" fill="#1c1c1c" text-anchor="middle">13</text>
<text x="974.46" y="713.4" font-size="16" fill="#1c1c1c" text-anchor="middle">14</text>
<text x="1014.19" y="713.4" font-size="16" fill="#1c1c1c" text-anchor="middle">15</text>
<text x="1053.93" y="713.4" font-size="16" fill="#1c1c1c" text-anchor="middle">16</text>
<text x="1093.67" y="713.4" font-size="16" fill="#1c1c1c" text-anchor="middle">17</text>
<text x="1133.41" y="713.4" font-size="16" fill="#1c1c1c" text-anchor="middle">18</text>
<text x="1173.14" y="713.4" font-size="16" fill="#1c1c1c" text-anchor="middle">19</text>
<text x="1212.88" y="713.4" font-size="16" fill="#1c1c1c" text-anchor="middle">20</text>
<text x="1252.62" y="713.4" font-size="16" fill="#1c1c1c" text-anchor="middle">21</text>
<text x="1292.36" y="713.4" font-size="16" fill="#1c1c1c" text-anchor="middle">22</text>
<text x="1332.09" y="713.4" font-size="16" fill="#1c1c1c" text-anchor="middle">23</text>
<text x="1371.83" y="713.4" font-size="16" fill="#1c1c1c" text-anchor="middle">24</text>
<text x="1411.57" y="713.4" font-size="16" fill="#1c1c1c" text-anchor="middle">25</text>
<text x="1451.31" y="713.4" font-size="16" fill="#1c1c1c" text-anchor="middle">26</text>
<text x="1491.04" y="713.4" font-size="16" fill="#1c1c1c" text-anchor="middle">27</text>
<text x="1530.78" y="713.4" font-size="16" fill="#1c1c1c" text-anchor="middle">28</text>
<text x="1570.52" y="713.4" font-size="16" fill="#1c1c1c" text-anchor="middle">29</text>
<text x="1610.26" y="713.4" font-size="16" fill="#1c1c1c" text-anchor="middle">30</text>
<text x="1649.99" y="713.4" font-size="16" fill="#1c1c1c" text-anchor="middle">31</text>
<text x="1689.73" y="713.4" font-size="16" fill="#1c1c1c" text-anchor="middle">32</text>
<text x="1729.47" y="713.4" font-size="16" fill="#1c1c1c" text-anchor="middle">33</text>
<text x="1769.21" y="713.4" font-size="16" fill="#1c1c1c" text-anchor="middle">34</text>
<text x="1808.94" y="713.4" font-size="16" fill="#1c1c1c" text-anchor="middle">35</text>
<text x="1848.68" y="713.4" font-size="16" fill="#1c1c1c" text-anchor="middle">36</text>
<text x="1888.42" y="713.4" font-size="16" fill="#1c1c1c" text-anchor="middle">37</text>
<text x="1928.16" y="713.4" font-size="16" fill="#1c1c1c" text-anchor="middle">38</text>
<text x="1967.89" y="713.4" font-size="16" fill="#1c1c1c" text-anchor="middle">39</text>
<text x="2007.63" y="713.4" font-size="16" fill="#1c1c1c" text-anchor="middle">40</text>
<rect x="373.50" y="729.20" width="1661.50" height="40.60" fill="#1f2731" />
<rect x="373.50" y="769.80" width="1642.50" height="495.00" fill="#ffffff" />
<rect x="2016.00" y="769.80" width="19.00" height="495.00" fill="#fbfbfb" />
<rect x="373.50" y="814.62" width="1642.50" height="44.82" fill="#f4f4f5" />
<rect x="373.50" y="904.26" width="1642.50" height="44.82" fill="#f4f4f5" />
<rect x="373.50" y="993.90" width="1642.50" height="44.82" fill="#f4f4f5" />
<rect x="373.50" y="1083.54" width="1642.50" height="44.82" fill="#dcdfe4" />
<rect x="373.50" y="1173.18" width="1642.50" height="44.82" fill="#f4f4f5" />
<rect x="2020.5" y="775" width="10.5" height="128" rx="5.2" fill="#c4c6ca"/>
<rect x="453.30" y="769.80" width="1.20" height="495.00" fill="#d4d5d8" />
<rect x="453.30" y="729.20" width="1.20" height="40.60" fill="#7d828a" />
<rect x="682.60" y="769.80" width="1.20" height="495.00" fill="#d4d5d8" />
<rect x="682.60" y="729.20" width="1.20" height="40.60" fill="#7d828a" />
<rect x="911.60" y="769.80" width="1.20" height="495.00" fill="#d4d5d8" />
<rect x="911.60" y="729.20" width="1.20" height="40.60" fill="#7d828a" />
<rect x="1141.00" y="769.80" width="1.20" height="495.00" fill="#d4d5d8" />
<rect x="1141.00" y="729.20" width="1.20" height="40.60" fill="#7d828a" />
<rect x="1370.60" y="769.80" width="1.20" height="495.00" fill="#d4d5d8" />
<rect x="1370.60" y="729.20" width="1.20" height="40.60" fill="#7d828a" />
<rect x="1599.00" y="769.80" width="1.20" height="495.00" fill="#d4d5d8" />
<rect x="1599.00" y="729.20" width="1.20" height="40.60" fill="#7d828a" />
<rect x="1828.80" y="769.80" width="1.20" height="495.00" fill="#d4d5d8" />
<rect x="1828.80" y="729.20" width="1.20" height="40.60" fill="#7d828a" />
<rect x="1921.60" y="769.80" width="1.20" height="495.00" fill="#d4d5d8" />
<rect x="1921.60" y="729.20" width="1.20" height="40.60" fill="#7d828a" />
<text x="385.05" y="758.25" font-size="23.11" font-weight="bold" fill="#ffffff" textLength="18.30" lengthAdjust="spacingAndGlyphs"  stroke="#ffffff" stroke-width="0.5" stroke-linejoin="round">No</text>
<text x="466.75" y="758.25" font-size="23.11" font-weight="bold" fill="#ffffff" textLength="82.50" lengthAdjust="spacingAndGlyphs"  stroke="#ffffff" stroke-width="0.5" stroke-linejoin="round">Description</text>
<text x="695.75" y="758.25" font-size="23.11" font-weight="bold" fill="#ffffff" textLength="32.29" lengthAdjust="spacingAndGlyphs"  stroke="#ffffff" stroke-width="0.5" stroke-linejoin="round">Date</text>
<text x="924.25" y="758.25" font-size="23.11" font-weight="bold" fill="#ffffff" textLength="94.99" lengthAdjust="spacingAndGlyphs"  stroke="#ffffff" stroke-width="0.5" stroke-linejoin="round">Voltage [mV]</text>
<text x="1154.35" y="758.25" font-size="23.11" font-weight="bold" fill="#ffffff" textLength="127.71" lengthAdjust="spacingAndGlyphs"  stroke="#ffffff" stroke-width="0.5" stroke-linejoin="round">Temperature [°C]</text>
<text x="1383.05" y="758.25" font-size="23.11" font-weight="bold" fill="#ffffff" textLength="120.50" lengthAdjust="spacingAndGlyphs"  stroke="#ffffff" stroke-width="0.5" stroke-linejoin="round">Resistance [μΩ]</text>
<text x="1612.25" y="758.25" font-size="23.11" font-weight="bold" fill="#ffffff" textLength="132.09" lengthAdjust="spacingAndGlyphs"  stroke="#ffffff" stroke-width="0.5" stroke-linejoin="round">Voltage RMS [mV]</text>
<text x="1841.25" y="758.25" font-size="23.11" font-weight="bold" fill="#ffffff" textLength="34.10" lengthAdjust="spacingAndGlyphs"  stroke="#ffffff" stroke-width="0.5" stroke-linejoin="round">RSSI</text>
<text x="1934.65" y="758.25" font-size="23.11" font-weight="bold" fill="#ffffff" textLength="41.51" lengthAdjust="spacingAndGlyphs"  stroke="#ffffff" stroke-width="0.5" stroke-linejoin="round">Notes</text>
<text x="384.60" y="800.30" font-size="18.70" font-weight="normal" fill="#555a60" text-anchor="start" >1</text>
<text x="694.60" y="800.30" font-size="18.70" font-weight="normal" fill="#555a60" text-anchor="start" >2022-04-22 10:47:16</text>
<text x="923.80" y="800.30" font-size="18.70" font-weight="normal" fill="#555a60" text-anchor="start" >12655</text>
<text x="1153.20" y="800.30" font-size="18.70" font-weight="normal" fill="#555a60" text-anchor="start" >28.15</text>
<text x="1382.40" y="800.30" font-size="18.70" font-weight="normal" fill="#555a60" text-anchor="start" >6259</text>
<text x="1611.60" y="800.30" font-size="18.70" font-weight="normal" fill="#555a60" text-anchor="start" >224</text>
<text x="1840.60" y="800.30" font-size="18.70" font-weight="normal" fill="#555a60" text-anchor="start" >255</text>
<g transform="translate(1935.6 799.7) rotate(-45)" fill="#4a4f55"><path d="M0.8 0 L4.6 -2.1 H16.4 V2.1 H4.6 Z" fill="none" stroke="#4a4f55" stroke-width="1.7" stroke-linejoin="round"/><path d="M0 0 L3.6 -2 V2 Z"/><rect x="17.6" y="-2.95" width="4.4" height="5.9" rx="2.2"/></g>
<text x="384.60" y="845.12" font-size="18.70" font-weight="normal" fill="#555a60" text-anchor="start" >2</text>
<text x="694.60" y="845.12" font-size="18.70" font-weight="normal" fill="#555a60" text-anchor="start" >2022-04-22 10:59:08</text>
<text x="923.80" y="845.12" font-size="18.70" font-weight="normal" fill="#555a60" text-anchor="start" >12681</text>
<text x="1153.20" y="845.12" font-size="18.70" font-weight="normal" fill="#555a60" text-anchor="start" >25.99</text>
<text x="1382.40" y="845.12" font-size="18.70" font-weight="normal" fill="#555a60" text-anchor="start" >6613</text>
<text x="1611.60" y="845.12" font-size="18.70" font-weight="normal" fill="#555a60" text-anchor="start" >213</text>
<text x="1840.60" y="845.12" font-size="18.70" font-weight="normal" fill="#555a60" text-anchor="start" >255</text>
<g transform="translate(1935.6 844.5) rotate(-45)" fill="#4a4f55"><path d="M0.8 0 L4.6 -2.1 H16.4 V2.1 H4.6 Z" fill="none" stroke="#4a4f55" stroke-width="1.7" stroke-linejoin="round"/><path d="M0 0 L3.6 -2 V2 Z"/><rect x="17.6" y="-2.95" width="4.4" height="5.9" rx="2.2"/></g>
<text x="384.60" y="889.94" font-size="18.70" font-weight="normal" fill="#555a60" text-anchor="start" >3</text>
<text x="694.60" y="889.94" font-size="18.70" font-weight="normal" fill="#555a60" text-anchor="start" >2022-04-22 10:54:16</text>
<text x="923.80" y="889.94" font-size="18.70" font-weight="normal" fill="#555a60" text-anchor="start" >12782</text>
<text x="1153.20" y="889.94" font-size="18.70" font-weight="normal" fill="#555a60" text-anchor="start" >24.91</text>
<text x="1382.40" y="889.94" font-size="18.70" font-weight="normal" fill="#555a60" text-anchor="start" >5769</text>
<text x="1611.60" y="889.94" font-size="18.70" font-weight="normal" fill="#555a60" text-anchor="start" >238</text>
<text x="1840.60" y="889.94" font-size="18.70" font-weight="normal" fill="#555a60" text-anchor="start" >255</text>
<g transform="translate(1935.6 889.3) rotate(-45)" fill="#4a4f55"><path d="M0.8 0 L4.6 -2.1 H16.4 V2.1 H4.6 Z" fill="none" stroke="#4a4f55" stroke-width="1.7" stroke-linejoin="round"/><path d="M0 0 L3.6 -2 V2 Z"/><rect x="17.6" y="-2.95" width="4.4" height="5.9" rx="2.2"/></g>
<text x="384.60" y="934.76" font-size="18.70" font-weight="normal" fill="#555a60" text-anchor="start" >4</text>
<text x="694.60" y="934.76" font-size="18.70" font-weight="normal" fill="#555a60" text-anchor="start" >2022-04-22 10:22:31</text>
<text x="923.80" y="934.76" font-size="18.70" font-weight="normal" fill="#555a60" text-anchor="start" >12413</text>
<text x="1153.20" y="934.76" font-size="18.70" font-weight="normal" fill="#555a60" text-anchor="start" >23.7</text>
<text x="1382.40" y="934.76" font-size="18.70" font-weight="normal" fill="#555a60" text-anchor="start" >5354</text>
<text x="1611.60" y="934.76" font-size="18.70" font-weight="normal" fill="#555a60" text-anchor="start" >238</text>
<text x="1840.60" y="934.76" font-size="18.70" font-weight="normal" fill="#555a60" text-anchor="start" >255</text>
<g transform="translate(1935.6 934.2) rotate(-45)" fill="#4a4f55"><path d="M0.8 0 L4.6 -2.1 H16.4 V2.1 H4.6 Z" fill="none" stroke="#4a4f55" stroke-width="1.7" stroke-linejoin="round"/><path d="M0 0 L3.6 -2 V2 Z"/><rect x="17.6" y="-2.95" width="4.4" height="5.9" rx="2.2"/></g>
<text x="384.60" y="979.58" font-size="18.70" font-weight="normal" fill="#555a60" text-anchor="start" >5</text>
<text x="694.60" y="979.58" font-size="18.70" font-weight="normal" fill="#555a60" text-anchor="start" >2022-04-22 10:44:33</text>
<text x="923.80" y="979.58" font-size="18.70" font-weight="normal" fill="#555a60" text-anchor="start" >12908</text>
<text x="1153.20" y="979.58" font-size="18.70" font-weight="normal" fill="#555a60" text-anchor="start" >25.33</text>
<text x="1382.40" y="979.58" font-size="18.70" font-weight="normal" fill="#555a60" text-anchor="start" >6649</text>
<text x="1611.60" y="979.58" font-size="18.70" font-weight="normal" fill="#555a60" text-anchor="start" >205</text>
<text x="1840.60" y="979.58" font-size="18.70" font-weight="normal" fill="#555a60" text-anchor="start" >255</text>
<circle cx="1943.6" cy="970.6" r="8" fill="none" stroke="#4a4f55" stroke-width="1.8"/>
<rect x="1942.6" y="965.6" width="2" height="6.5" fill="#4a4f55"/><circle cx="1943.6" cy="974.8" r="1.1" fill="#4a4f55"/>
<text x="384.60" y="1024.40" font-size="18.70" font-weight="normal" fill="#555a60" text-anchor="start" >6</text>
<text x="694.60" y="1024.40" font-size="18.70" font-weight="normal" fill="#555a60" text-anchor="start" >2022-04-22 11:00:05</text>
<text x="923.80" y="1024.40" font-size="18.70" font-weight="normal" fill="#555a60" text-anchor="start" >12834</text>
<text x="1153.20" y="1024.40" font-size="18.70" font-weight="normal" fill="#555a60" text-anchor="start" >22.67</text>
<text x="1382.40" y="1024.40" font-size="18.70" font-weight="normal" fill="#555a60" text-anchor="start" >6819</text>
<text x="1611.60" y="1024.40" font-size="18.70" font-weight="normal" fill="#555a60" text-anchor="start" >219</text>
<text x="1840.60" y="1024.40" font-size="18.70" font-weight="normal" fill="#555a60" text-anchor="start" >255</text>
<g transform="translate(1935.6 1023.8) rotate(-45)" fill="#4a4f55"><path d="M0.8 0 L4.6 -2.1 H16.4 V2.1 H4.6 Z" fill="none" stroke="#4a4f55" stroke-width="1.7" stroke-linejoin="round"/><path d="M0 0 L3.6 -2 V2 Z"/><rect x="17.6" y="-2.95" width="4.4" height="5.9" rx="2.2"/></g>
<text x="384.60" y="1069.22" font-size="18.70" font-weight="normal" fill="#555a60" text-anchor="start" >7</text>
<text x="694.60" y="1069.22" font-size="18.70" font-weight="normal" fill="#555a60" text-anchor="start" >2022-04-22 10:54:07</text>
<text x="923.80" y="1069.22" font-size="18.70" font-weight="normal" fill="#555a60" text-anchor="start" >12671</text>
<text x="1153.20" y="1069.22" font-size="18.70" font-weight="normal" fill="#555a60" text-anchor="start" >25.63</text>
<text x="1382.40" y="1069.22" font-size="18.70" font-weight="normal" fill="#555a60" text-anchor="start" >7258</text>
<text x="1611.60" y="1069.22" font-size="18.70" font-weight="normal" fill="#555a60" text-anchor="start" >250</text>
<text x="1840.60" y="1069.22" font-size="18.70" font-weight="normal" fill="#555a60" text-anchor="start" >255</text>
<g transform="translate(1935.6 1068.6) rotate(-45)" fill="#4a4f55"><path d="M0.8 0 L4.6 -2.1 H16.4 V2.1 H4.6 Z" fill="none" stroke="#4a4f55" stroke-width="1.7" stroke-linejoin="round"/><path d="M0 0 L3.6 -2 V2 Z"/><rect x="17.6" y="-2.95" width="4.4" height="5.9" rx="2.2"/></g>
<text x="384.60" y="1114.04" font-size="18.70" font-weight="normal" fill="#555a60" text-anchor="start" >8</text>
<text x="694.60" y="1114.04" font-size="18.70" font-weight="normal" fill="#555a60" text-anchor="start" >2022-04-22 10:52:25</text>
<text x="923.80" y="1114.04" font-size="18.70" font-weight="normal" fill="#555a60" text-anchor="start" >12618</text>
<text x="1153.20" y="1114.04" font-size="18.70" font-weight="normal" fill="#555a60" text-anchor="start" >26.47</text>
<text x="1382.40" y="1114.04" font-size="18.70" font-weight="normal" fill="#555a60" text-anchor="start" >6266</text>
<text x="1611.60" y="1114.04" font-size="18.70" font-weight="normal" fill="#555a60" text-anchor="start" >228</text>
<text x="1840.60" y="1114.04" font-size="18.70" font-weight="normal" fill="#555a60" text-anchor="start" >255</text>
<g transform="translate(1935.6 1113.4) rotate(-45)" fill="#4a4f55"><path d="M0.8 0 L4.6 -2.1 H16.4 V2.1 H4.6 Z" fill="none" stroke="#4a4f55" stroke-width="1.7" stroke-linejoin="round"/><path d="M0 0 L3.6 -2 V2 Z"/><rect x="17.6" y="-2.95" width="4.4" height="5.9" rx="2.2"/></g>
<text x="384.60" y="1158.86" font-size="18.70" font-weight="normal" fill="#555a60" text-anchor="start" >9</text>
<text x="694.60" y="1158.86" font-size="18.70" font-weight="normal" fill="#555a60" text-anchor="start" >2022-04-22 10:53:58</text>
<text x="923.80" y="1158.86" font-size="18.70" font-weight="normal" fill="#555a60" text-anchor="start" >12489</text>
<text x="1153.20" y="1158.86" font-size="18.70" font-weight="normal" fill="#555a60" text-anchor="start" >24.35</text>
<text x="1382.40" y="1158.86" font-size="18.70" font-weight="normal" fill="#555a60" text-anchor="start" >6526</text>
<text x="1611.60" y="1158.86" font-size="18.70" font-weight="normal" fill="#555a60" text-anchor="start" >212</text>
<text x="1840.60" y="1158.86" font-size="18.70" font-weight="normal" fill="#555a60" text-anchor="start" >255</text>
<g transform="translate(1935.6 1158.3) rotate(-45)" fill="#4a4f55"><path d="M0.8 0 L4.6 -2.1 H16.4 V2.1 H4.6 Z" fill="none" stroke="#4a4f55" stroke-width="1.7" stroke-linejoin="round"/><path d="M0 0 L3.6 -2 V2 Z"/><rect x="17.6" y="-2.95" width="4.4" height="5.9" rx="2.2"/></g>
<text x="384.60" y="1203.68" font-size="18.70" font-weight="normal" fill="#555a60" text-anchor="start" >10</text>
<text x="694.60" y="1203.68" font-size="18.70" font-weight="normal" fill="#555a60" text-anchor="start" >2022-04-22 10:32:29</text>
<text x="923.80" y="1203.68" font-size="18.70" font-weight="normal" fill="#555a60" text-anchor="start" >12933</text>
<text x="1153.20" y="1203.68" font-size="18.70" font-weight="normal" fill="#555a60" text-anchor="start" >20.1</text>
<text x="1382.40" y="1203.68" font-size="18.70" font-weight="normal" fill="#555a60" text-anchor="start" >6025</text>
<text x="1611.60" y="1203.68" font-size="18.70" font-weight="normal" fill="#555a60" text-anchor="start" >223</text>
<text x="1840.60" y="1203.68" font-size="18.70" font-weight="normal" fill="#555a60" text-anchor="start" >255</text>
<g transform="translate(1935.6 1203.1) rotate(-45)" fill="#4a4f55"><path d="M0.8 0 L4.6 -2.1 H16.4 V2.1 H4.6 Z" fill="none" stroke="#4a4f55" stroke-width="1.7" stroke-linejoin="round"/><path d="M0 0 L3.6 -2 V2 Z"/><rect x="17.6" y="-2.95" width="4.4" height="5.9" rx="2.2"/></g>
<text x="384.60" y="1248.50" font-size="18.70" font-weight="normal" fill="#555a60" text-anchor="start" >11</text>
<text x="694.60" y="1248.50" font-size="18.70" font-weight="normal" fill="#555a60" text-anchor="start" >2022-04-22 10:53:37</text>
<text x="923.80" y="1248.50" font-size="18.70" font-weight="normal" fill="#555a60" text-anchor="start" >12664</text>
<text x="1153.20" y="1248.50" font-size="18.70" font-weight="normal" fill="#555a60" text-anchor="start" >23.07</text>
<text x="1382.40" y="1248.50" font-size="18.70" font-weight="normal" fill="#555a60" text-anchor="start" >7282</text>
<text x="1611.60" y="1248.50" font-size="18.70" font-weight="normal" fill="#555a60" text-anchor="start" >208</text>
<text x="1840.60" y="1248.50" font-size="18.70" font-weight="normal" fill="#555a60" text-anchor="start" >255</text>
<g transform="translate(1935.6 1247.9) rotate(-45)" fill="#4a4f55"><path d="M0.8 0 L4.6 -2.1 H16.4 V2.1 H4.6 Z" fill="none" stroke="#4a4f55" stroke-width="1.7" stroke-linejoin="round"/><path d="M0 0 L3.6 -2 V2 Z"/><rect x="17.6" y="-2.95" width="4.4" height="5.9" rx="2.2"/></g>
</svg>
</body></html>
